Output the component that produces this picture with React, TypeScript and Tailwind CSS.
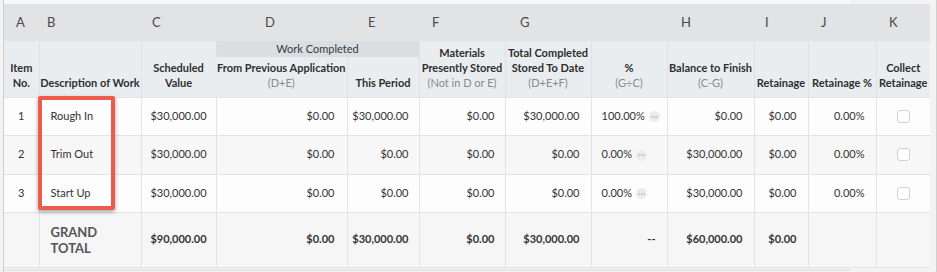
import React from 'react';

const FONT = { fontFamily: 'Lato, "Open Sans", sans-serif' };

type Row = {
  no: string;
  desc: string;
  scheduled: string;
  prev: string;
  period: string;
  stored: string;
  total: string;
  pct: string;
  balance: string;
  retainage: string;
  retPct: string;
};

const ROWS: Row[] = [
  { no: '1', desc: 'Rough In', scheduled: '$30,000.00', prev: '$0.00', period: '$30,000.00', stored: '$0.00', total: '$30,000.00', pct: '100.00%', balance: '$0.00', retainage: '$0.00', retPct: '0.00%' },
  { no: '2', desc: 'Trim Out', scheduled: '$30,000.00', prev: '$0.00', period: '$0.00', stored: '$0.00', total: '$0.00', pct: '0.00%', balance: '$30,000.00', retainage: '$0.00', retPct: '0.00%' },
  { no: '3', desc: 'Start Up', scheduled: '$30,000.00', prev: '$0.00', period: '$0.00', stored: '$0.00', total: '$0.00', pct: '0.00%', balance: '$30,000.00', retainage: '$0.00', retPct: '0.00%' },
];

const WIDTHS = [35, 102, 75, 131, 72, 86, 86, 76, 87, 54, 68, 54];

// letters over the columns, with their own left offsets
const LETTERS = [
  { l: 'A', pl: 'pl-[12px]' },
  { l: 'B', pl: 'pl-[8px]' },
  { l: 'C', pl: 'pl-[11px]' },
  { l: 'D', pl: 'pl-[49px]' },
  { l: 'E', pl: 'pl-[21px]' },
  { l: 'F', pl: 'pl-[13px]' },
  { l: 'G', pl: 'pl-[15px]' },
  { l: '', pl: '' },
  { l: 'H', pl: 'pl-[14px]' },
  { l: 'I', pl: 'pl-[11px]' },
  { l: 'J', pl: 'pl-[13px]' },
  { l: 'K', pl: 'pl-[13px]' },
];

function Dots() {
  return (
    <span className="inline-flex items-center justify-center w-[11px] h-[11px] rounded-full bg-[#ececec] ml-[4px] align-middle">
      <svg width="7" height="2" viewBox="0 0 7 2">
        <circle cx="1" cy="1" r="0.7" fill="#9a9a9a" />
        <circle cx="3.5" cy="1" r="0.7" fill="#9a9a9a" />
        <circle cx="6" cy="1" r="0.7" fill="#9a9a9a" />
      </svg>
    </span>
  );
}

const th = 'border-l border-[#dde2e6] first:border-l-0 align-bottom pb-[7px] px-0 whitespace-nowrap font-bold text-[11px] leading-[15px] text-[#2f2f2f] text-center';
const sub = 'block font-normal text-[#8a8a8a]';
const td = 'border-l border-[#e3e3e3] first:border-l-0 p-0 whitespace-nowrap text-[11px] text-[#333]';

export default function App() {
  return (
    <div style={FONT} className="w-[937px] h-[272px] bg-[#f3f3f3] relative overflow-hidden">
      {/* top scroll strip */}
      <div className="h-[4px] ml-[4px] w-[847px] bg-[#f8f8f8]" />
      <div className="absolute left-[3px] top-0 bottom-0 w-px bg-[#cfcfcf]" />
      <div className="absolute left-[936px] top-0 bottom-0 w-px bg-[#cfcfcf]" />

      <div className="relative ml-[4px] w-[926px]">
        <table className="border-collapse table-fixed w-[926px]">
          <colgroup>
            {WIDTHS.map((w, i) => (
              <col key={i} style={{ width: w }} />
            ))}
          </colgroup>
          <thead>
            <tr className="h-[37px] bg-[#e2e3e5]">
              {LETTERS.map((c, i) => (
                <th key={i} className={`p-0 text-left font-normal text-[13px] text-[#4a4a4a] ${c.pl}`}>
                  {c.l}
                </th>
              ))}
            </tr>
            <tr className="h-[16px] bg-[#e9edf0]">
              <th rowSpan={2} className={th}>Item<br />No.</th>
              <th rowSpan={2} className={th}>Description of Work</th>
              <th rowSpan={2} className={th}>Scheduled<br />Value</th>
              <th colSpan={2} className="border-l border-[#dde2e6] bg-[#d9dee3] text-center font-normal text-[11px] text-[#3a3a3a] leading-[16px] p-0">
                Work Completed
              </th>
              <th rowSpan={2} className={th}>Materials<br />Presently Stored<span className={sub}>(Not in D or E)</span></th>
              <th rowSpan={2} className={th}>Total Completed<br />Stored To Date<span className={sub}>(D+E+F)</span></th>
              <th rowSpan={2} className={th}>%<span className={sub}>(G÷C)</span></th>
              <th rowSpan={2} className={th}>Balance to Finish<span className={sub}>(C-G)</span></th>
              <th rowSpan={2} className={th}>Retainage</th>
              <th rowSpan={2} className={th}>Retainage %</th>
              <th rowSpan={2} className={th}>Collect<br />Retainage</th>
            </tr>
            <tr className="h-[40px] bg-[#e9edf0]">
              <th className={th}>From Previous Application<span className={sub}>(D+E)</span></th>
              <th className={th}>This Period</th>
            </tr>
          </thead>
          <tbody>
            {ROWS.map((r, i) => (
              <tr key={r.no} className={`border-t border-[#e3e3e3] ${i === 1 ? 'h-[39px] bg-[#f7f7f7]' : 'h-[38px] bg-[#fdfdfd]'}`}>
                <td className={`${td} text-center`}>{r.no}</td>
                <td className={`${td} pl-[11px]`}>{r.desc}</td>
                <td className={`${td} text-center`}>{r.scheduled}</td>
                <td className={`${td} text-right pr-[12px]`}>{r.prev}</td>
                <td className={`${td} text-right pr-[10px]`}>{r.period}</td>
                <td className={`${td} text-right pr-[10px]`}>{r.stored}</td>
                <td className={`${td} text-right pr-[11px]`}>{r.total}</td>
                <td className={`${td} pl-[10px]`}>
                  {r.pct}
                  <Dots />
                </td>
                <td className={`${td} text-right pr-[11px]`}>{r.balance}</td>
                <td className={`${td} text-right pr-[11px]`}>{r.retainage}</td>
                <td className={`${td} text-right pr-[11px]`}>{r.retPct}</td>
                <td className={`${td}`}>
                  <div className="mx-auto w-[13px] h-[13px] rounded-[3px] border border-[#d2d2d2] bg-white" />
                </td>
              </tr>
            ))}
            <tr className="h-[55px] bg-[#f6f6f6] border-t border-b border-[#e3e3e3]">
              <td className={td}></td>
              <td className={`${td} pl-[11px] font-bold text-[13px] leading-[16px] !text-[#555]`}>GRAND<br />TOTAL</td>
              <td className={`${td} text-center font-bold`}>$90,000.00</td>
              <td className={`${td} text-right pr-[12px] font-bold`}>$0.00</td>
              <td className={`${td} text-right pr-[10px] font-bold`}>$30,000.00</td>
              <td className={`${td} text-right pr-[10px] font-bold`}>$0.00</td>
              <td className={`${td} text-right pr-[11px] font-bold`}>$30,000.00</td>
              <td className={`${td} text-right pr-[11px] font-bold`}>--</td>
              <td className={`${td} text-right pr-[11px] font-bold`}>$60,000.00</td>
              <td className={`${td} text-right pr-[11px] font-bold`}>$0.00</td>
              <td className={td}></td>
              <td className={td}></td>
            </tr>
          </tbody>
        </table>

        {/* highlight box around descriptions */}
        <div className="absolute left-[34px] top-[92px] w-[77px] h-[114px] border-[4px] border-[#ee5a4b] rounded-[2px] shadow-[0_2px_4px_rgba(0,0,0,0.35)]" />
      </div>

      {/* bottom scroll strip */}
      <div className="ml-[4px] mt-[1px] w-[847px] h-[2px] bg-[#e6e6e6]" />
    </div>
  );
}
